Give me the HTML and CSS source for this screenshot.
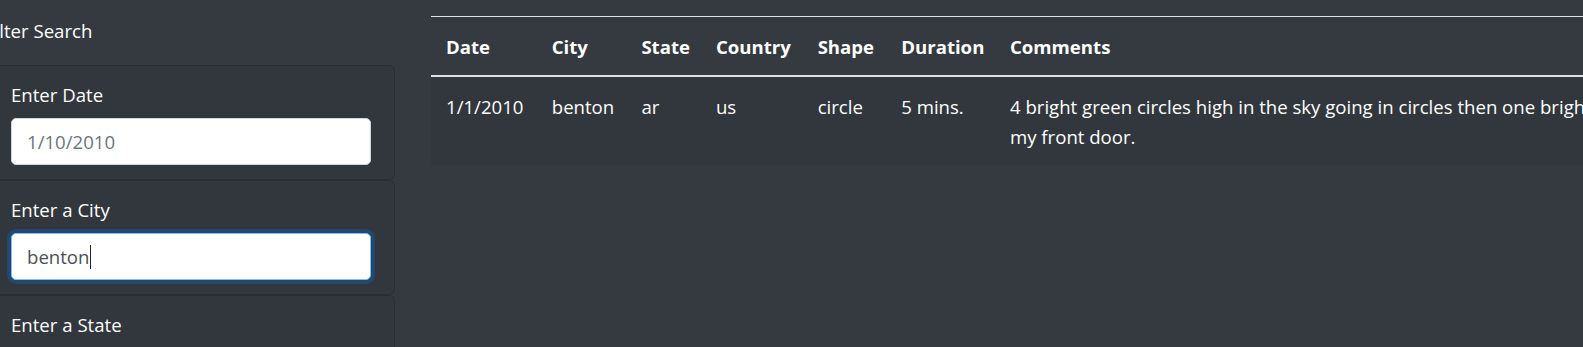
FILE: index.html
```html
<!DOCTYPE html>
<html lang="en">
<head>
<meta charset="utf-8">
<title>UFO Sightings</title>
<link rel="stylesheet" href="styles.css">
</head>
<body>
<div class="page">
  <aside class="sidebar">
    <div class="sidebar-title">Filter Search</div>
    <ul class="filters">
      <li class="filter">
        <label class="filter-label" for="datetime">Enter Date</label>
        <input class="filter-input" id="datetime" type="text" placeholder="1/10/2010">
      </li>
      <li class="filter">
        <label class="filter-label" for="city">Enter a City</label>
        <div class="filter-input is-focused" id="city"><span class="value">benton</span><span class="caret"></span></div>
      </li>
      <li class="filter">
        <label class="filter-label" for="state">Enter a State</label>
        <input class="filter-input" id="state" type="text" placeholder="ca">
      </li>
    </ul>
  </aside>
  <main class="content">
    <table class="ufo-table">
      <thead>
        <tr>
          <th class="col-date">Date</th>
          <th class="col-city">City</th>
          <th class="col-state">State</th>
          <th class="col-country">Country</th>
          <th class="col-shape">Shape</th>
          <th class="col-duration">Duration</th>
          <th class="col-comments">Comments</th>
        </tr>
      </thead>
      <tbody>
        <tr>
          <td>1/1/2010</td>
          <td>benton</td>
          <td>ar</td>
          <td>us</td>
          <td>circle</td>
          <td>5 mins.</td>
          <td>4 bright green circles high in the sky going in circles then one bright green light at<br>my front door.</td>
        </tr>
      </tbody>
    </table>
  </main>
</div>
</body>
</html>
```

FILE: styles.css
```css
html, body {
  margin: 0;
  padding: 0;
  overflow: hidden;
  background: #343a40;
}

body {
  font-family: "Open Sans", "Noto Sans", "Liberation Sans", sans-serif;
  font-size: 18.6px;
  line-height: 30px;
  color: #ffffff;
}

.page {
  display: flex;
  align-items: flex-start;
  margin-left: -13px;
  width: 2000px;
}

.sidebar {
  flex: 0 0 408px;
  width: 408px;
  padding-top: 16px;
}

.sidebar-title {
  height: 30px;
  margin-left: -2px;
  margin-bottom: 19px;
  white-space: nowrap;
}

.filters {
  list-style: none;
  margin: 0;
  padding: 0;
}

.filter {
  display: flex;
  flex-direction: column;
  gap: 8px;
  box-sizing: border-box;
  height: 115px;
  padding: 14px 23px 14px 23px;
  background: rgba(0, 0, 0, 0.05);
  border: 1px solid rgba(0, 0, 0, 0.16);
  border-radius: 6px;
}

.filter-label {
  display: block;
  flex: none;
  height: 30px;
}

.filter-input {
  flex: none;
  box-sizing: border-box;
  height: 47px;
  width: 100%;
  margin: 0;
  padding: 0 15px;
  font: inherit;
  color: #495057;
  background: #ffffff;
  border: 1px solid #ced4da;
  border-radius: 5px;
  outline: none;
  display: flex;
  align-items: center;
}

.filter-input::placeholder {
  color: #6c757d;
}

.filter-input.is-focused {
  border-color: #80bdff;
  box-shadow: 0 0 0 4px rgba(0, 123, 255, 0.25);
}

.caret {
  display: inline-block;
  width: 1px;
  height: 24px;
  background: #222;
  margin-left: 1px;
}

.content {
  flex: none;
  margin-left: 36px;
  padding-top: 16px;
}

.ufo-table {
  border-collapse: collapse;
  width: 1400px;
  table-layout: fixed;
}

.ufo-table th,
.ufo-table td {
  text-align: left;
  vertical-align: top;
  white-space: nowrap;
}

.ufo-table th {
  padding: 15px 15px 13px 15px;
  line-height: 30px;
  font-weight: 700;
  border-top: 1.25px solid #dee2e6;
  border-bottom: 2.5px solid #dee2e6;
}

.ufo-table td {
  padding: 15px 15px 14px 15px;
  line-height: 29.5px;
}

.ufo-table tbody tr {
  background: rgba(0, 0, 0, 0.05);
}

.col-date { width: 75px; }
.col-city { width: 59px; }
.col-state { width: 44px; }
.col-country { width: 71px; }
.col-shape { width: 53px; }
.col-duration { width: 78px; }
.col-comments { width: 800px; }
```
